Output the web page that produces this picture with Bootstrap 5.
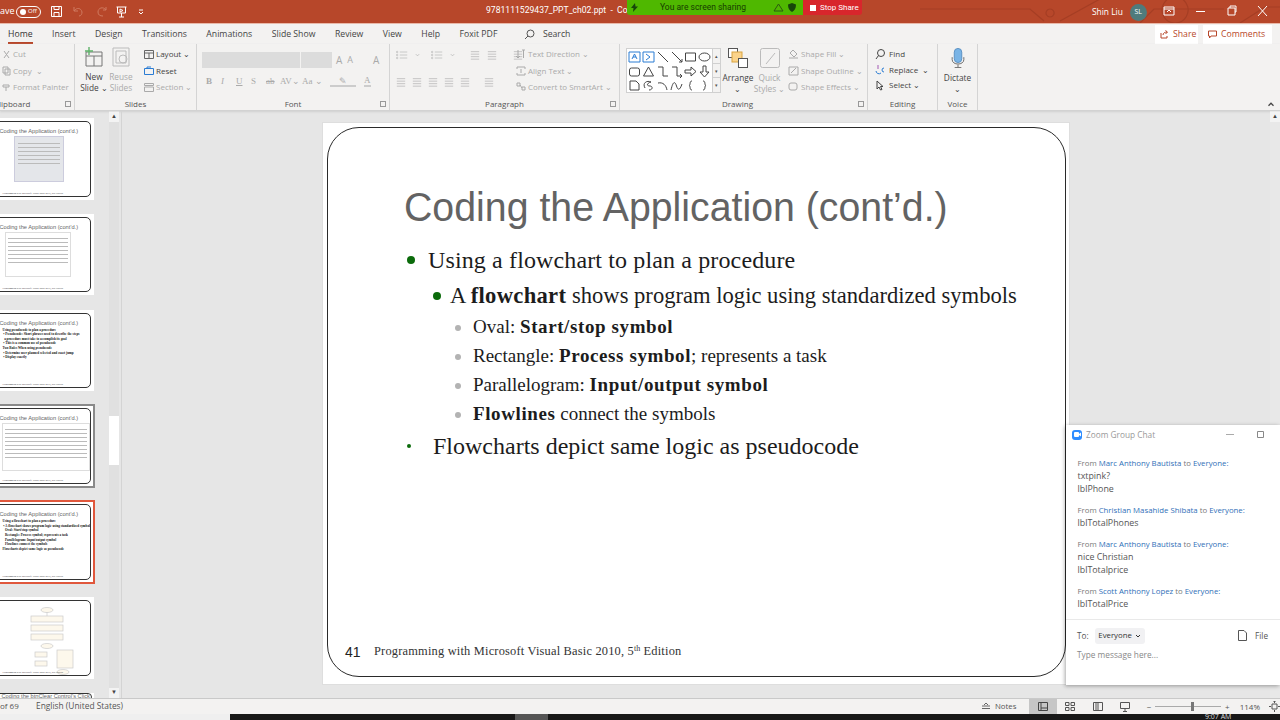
<!DOCTYPE html>
<html lang="en"><head><meta charset="utf-8"><title>PowerPoint</title>
<link href="https://cdn.jsdelivr.net/npm/bootstrap@5.3.0/dist/css/bootstrap.min.css" rel="stylesheet">
<style>
html,body{height:720px;width:1280px;overflow:hidden;margin:0}
body{font-family:"Open Sans","Liberation Sans",sans-serif;font-size:9px;color:#444;background:#e6e6e6;position:relative;line-height:1.2}
svg{display:block;flex:none}
.ic{fill:none;stroke:currentColor;stroke-width:1}
.titlebar{height:23px;background:#b7472a;color:#fff;position:relative;overflow:hidden}
.circuit{position:absolute;right:0;top:0;stroke:#a53e24;fill:none;stroke-width:1.2}
.ave{width:16px;white-space:nowrap}
.toggle{width:25px;height:12px;border:1px solid #fff;border-radius:7px;font-size:6px;gap:2px;padding-left:3px}
.toggle i{width:6px;height:6px;background:#fff;border-radius:50%}
.q1{margin-left:10px}.q2{margin-left:10px}.q3{margin-left:12px}.q4{margin-left:8px}.q5{margin-left:11px}
.doc{position:absolute;left:486px;top:5px;font-size:8.6px;font-family:"Roboto",sans-serif}
.user{position:absolute;left:1092px;top:4px;gap:7px;font-size:8.4px}
.avatar{width:17px;height:17px;border-radius:50%;background:#4f7b7c;font-size:7px}
.winbtns{position:absolute;left:1163px;top:5px;gap:18px}
.winbtns svg+svg{margin-left:2px}
.sharing{position:absolute;left:627px;top:0;height:15px;z-index:5;font-family:"Roboto",sans-serif;font-size:8.5px}
.sg{width:176px;background:#4fb800;color:#173c00;border-radius:0 0 0 3px;padding:0 4px;white-space:nowrap}
.sr{width:59px;background:#d8262c;color:#fff;border-radius:0 0 3px 0;gap:4px;padding-left:7px;font-size:8px;white-space:nowrap}
.sr i{width:6px;height:6px;background:#fff;flex:none}
.tabs{height:21px;background:#f3f2f1;padding-left:8px;gap:19.5px;font-size:8.7px;position:relative;border-top:1px solid #e9b9a9}
.tabs .on{color:#333;position:relative}
.tabs .on::after{content:"";position:absolute;left:0;right:0;bottom:-5px;height:2px;background:#b7472a}
.topbtn{position:absolute;top:1px;height:19px;background:#fff;color:#b7472a;gap:4px;padding:0 5px;font-size:8.7px}
.ribbon{height:67px;background:#f3f2f1;border-bottom:1px solid #d2d2d2;box-shadow:0 1px 2px #cfcfcf;position:relative}
.grp{height:66px;border-right:1px solid #d4d4d4;position:relative;flex:none;overflow:hidden}
.lbl{position:absolute;left:0;right:0;bottom:-1px;text-align:center;font-size:8px;color:#555;height:14px;line-height:14px}
.launch{position:absolute;right:3px;bottom:3px;width:6px;height:6px;border:1px solid #999}
.col3{display:flex;flex-direction:column;gap:4.5px;font-size:8px}
.col3>div{display:flex;align-items:center;gap:2px;height:12px;white-space:nowrap}
.dis{color:#aaa}
.big{display:flex;flex-direction:column;align-items:center;text-align:center;font-size:8.3px;line-height:11px;flex:none;white-space:nowrap}
.c1{width:75px}.c2{width:122px}.c3{width:193px}.c4{width:230px}.c5{width:248px}.c6{width:70px}.c7{width:40px}
.combo{height:16px;background:#dcdcdc;width:130px;flex:none}
.combo i{height:100%;border-right:1px solid #f3f2f1}
.gallery{width:87px;height:45px;background:#fff;border:1px solid #d0d0d0;display:grid;grid-template-columns:repeat(6,14px);grid-auto-rows:14.5px;padding:1px 1px;color:#444;flex:none}
.galside{width:8px;height:45px;border:1px solid #d0d0d0;border-left:0;color:#555;font-size:5px;flex:none}
.galside span{flex:1;display:flex;align-items:center;justify-content:center;border-bottom:1px solid #d0d0d0}
.galside span:last-child{border:0}
.main{height:587px;position:relative;overflow:hidden}
.side{width:122px;flex:none;border-right:1px solid #d4d4d4;position:relative;overflow:hidden}
.thumbs{width:109px;overflow:hidden;padding-top:7px;display:flex;flex-direction:column;align-items:flex-end;gap:14.2px;padding-right:15.5px;height:100%}
.thumb{width:122px;height:81.6px;background:#fff;flex:none;padding:2px;border:1px solid transparent;position:relative}
.thumb>div{height:100%;border:1px solid #333;border-radius:5px;padding:5px 0 0 27px;overflow:hidden;position:relative;font-family:"Liberation Serif",serif;color:#111;font-size:3.3px;line-height:4.6px;white-space:nowrap}
.thumb.grey{outline:2px solid #8a8a8a;outline-offset:-1px}
.thumb.act{outline:2px solid #e0573c;outline-offset:-1px}
.thumb.cut{height:5px;padding:0 2px;border:0}
.thumb.cut>div{padding-top:0;height:8px}
.tt{font:5.7px/8px "Liberation Sans",sans-serif;color:#666;white-space:nowrap;margin-left:-3px;margin-bottom:1px}
.cut .tt{line-height:4px;margin:0}
.ft{position:absolute;left:27px;bottom:1px;font-size:2.5px;line-height:3px;color:#333;white-space:nowrap}
.shot{background:#e4e6ea;border:1px solid #ccd;margin-left:11px;width:50px;height:46px;padding:3px}
.shot b,.tblb b{display:block;height:1px;background:#bbb;margin:3px 0}
.tblb{border:1px solid #ddd;width:66px;height:45px;margin-left:2px;padding:2px}
.wide{width:88px;height:48px;margin-left:-1px}
.fl{width:60px;height:70px;margin-left:14px}
.sb{position:absolute;top:0;bottom:0;width:10px;left:109px;background:#e0e0e0;font-size:6px;color:#444}
.sb .u,.sb .d,.sb2 .u{position:absolute;left:0;width:10px;height:10px;background:#f3f3f3;display:flex;align-items:center;justify-content:center}
.sb .u{top:1px}.sb .d{bottom:0}
.sb .th{position:absolute;left:0;width:10px;top:305px;height:49px;background:#fff}
.sb2{position:absolute;top:0;bottom:0;right:0;width:10px;background:#e8e8e8;font-size:6px;color:#444}
.sb2 .u{top:1px}
.canvas{flex:1;padding:11px 10px 0 0}
.slide{width:748px;height:563px;background:#fff;border:1px solid #dedede;margin:0 auto;padding:4px 3px 7px 4px}
.frame{height:100%;border:1px solid #2a2a2a;border-radius:32px;padding-left:77px;display:flex;flex-direction:column;position:relative}
.stitle{font:41px/44px "Liberation Sans",sans-serif;color:#636363;margin-top:57px;white-space:nowrap;transform:scaleX(.958);transform-origin:0 50%;margin-left:-1px}
.serif{font-family:"Liberation Serif",serif;color:#1c1c1c;white-space:nowrap;margin-top:16px}
.l1,.l2,.l3{display:flex;align-items:center}
.dot{border-radius:50%;flex:none}
.l1{font-size:24px;height:30px}
.l2{font-size:22.6px;height:30px;margin-left:28px;margin-top:6px}
.l3{font-size:19px;height:29px;margin-left:49px}
.l3 b{letter-spacing:.6px}
.l2 b{letter-spacing:.3px}
.l3.first{margin-top:2px}
.l1.last{margin-top:2px}
.b1{width:8px;height:8px;margin-left:2px;margin-right:13px}
.b2{width:8px;height:8px;margin-right:9px}
.b3{width:6px;height:6px;margin-right:12px;margin-left:1px}
.b4{width:4px;height:4px;margin-left:2px;margin-right:22px}
.g{background:#0b6b0b}.s{background:#b3b3b3}
.sfoot{margin-top:auto;margin-left:-60px;height:25px;margin-bottom:12px;display:flex;align-items:center}
.num{font:14px "Liberation Sans",sans-serif;color:#222;width:29px}
.ftxt{font:12.4px "Liberation Serif",serif;color:#333;letter-spacing:.2px}
.ftxt sup{font-size:8px;letter-spacing:0}
.status{height:16px;background:#f3f2f1;border-top:1px solid #c9c9c9;font-size:8px;color:#555;position:relative}
.st-l{position:absolute;left:36px;top:2px;font-size:8.4px;color:#555}
.st-o{position:absolute;left:0;top:2px}
.st-r{position:absolute;left:981px;top:0;height:15px;width:299px}
.vb{width:27.3px;height:15px;flex:none}
.vb.on{background:#c6c6c6}
.slider{width:70px;height:1px;background:#aaa;position:relative}
.slider i{position:absolute;left:36px;top:-4px;width:3px;height:9px;background:#777}
.under{height:6px;background:#efefef;position:relative;overflow:hidden}
.blk{position:absolute;left:230px;right:0;top:0;bottom:0;background:#181818}
.blk i{position:absolute;left:285px;width:33px;top:0;bottom:0;background:#555}
.clock{position:absolute;left:975px;top:-1px;font-size:7px;color:#ddd;line-height:7px}
.chat{position:absolute;left:1066px;top:425px;width:214px;height:260px;background:#fff;box-shadow:-1px 1px 4px rgba(0,0,0,.35);z-index:6;font-family:"Open Sans",sans-serif;color:#555}
.chead{height:19px;padding:0 0 0 6px;color:#999;font-size:8.3px;gap:4px;position:relative}
.zic{width:10px;height:10px;border-radius:3px;background:#2d8cff}
.msgs{height:176px;padding:13px 0 0 11.5px;font-size:8.85px;line-height:13px;border-bottom:1px solid #e9e9e9}
.msg{margin-bottom:8px;color:#555}
.from{font-size:7.8px;color:#777;white-space:nowrap}
.from span{color:#2f6fb8}
.cto{height:31px;padding:0 12px 0 11px;font-size:8.2px;position:relative}
.pill{background:#f1f1f3;border-radius:3px;height:16px;width:50px;margin-left:6px;color:#333;font-size:7.8px;gap:3px}
.place{padding-left:11px;color:#888;font-size:8.3px;margin-top:-1px}
</style></head>
<body>
<svg width="0" height="0" class="position-absolute"><defs>
<symbol id="list" viewBox="0 0 16 12"><circle cx="1.5" cy="2" r="1"/><circle cx="1.5" cy="6" r="1"/><circle cx="1.5" cy="10" r="1"/><path d="M5 2h10M5 6h10M5 10h10"/></symbol>
<symbol id="align" viewBox="0 0 12 12"><path d="M1 2h10M1 5h10M1 8h10M1 11h10"/></symbol>
<symbol id="chev" viewBox="0 0 6 4"><path d="M1 1l2 2 2-2"/></symbol>
</defs></svg>

<div class="titlebar">
<svg class="circuit" width="560" height="23" viewBox="0 0 560 23"><path d="M200 9h110l14 12M330 9a4 4 0 1 0 .1 0M340 21l40-22M420 23l14-14h70M455 23a13 13 0 1 1 .1 0M520 23l25-16h15"/></svg>
<div class="d-flex align-items-center h-100">
<span class="ave">ave</span>
<div class="toggle d-flex align-items-center"><i></i><span>Off</span></div>
<svg class="ic q1" width="11" height="11" viewBox="0 0 11 11" color="#fff"><path d="M.5.5h10v10H.5zM3 .5v3h5v-3M3 10.500v-4h5v4"/></svg>
<svg class="ic q2" width="13" height="11" viewBox="0 0 13 11" color="#cf7a60"><path d="M2 1v4h4M2 5c3-4 7-3 8 1 0 2-1 4-3 4"/></svg>
<svg class="ic q3" width="11" height="11" viewBox="0 0 11 11" color="#cf7a60"><path d="M9 1v3H6M9 4C6 0 1 2 1 6c0 3 2 4 5 4"/></svg>
<svg class="ic q4" width="11" height="12" viewBox="0 0 11 12" color="#fff"><path d="M.5 1h10M1.500 1v6h8V1M5.500 7v4M3 11h5M4 3l3 1.500L4 6z"/></svg>
<svg class="ic q5" width="6" height="6" viewBox="0 0 6 6" color="#fff"><path d="M1 1h4M1 3l2 2 2-2"/></svg>
</div>
<div class="doc">9781111529437_PPT_ch02.ppt&nbsp; -&nbsp; Comp</div>
<div class="user d-flex align-items-center"><span>Shin Liu</span><div class="avatar d-flex align-items-center justify-content-center">SL</div></div>
<div class="winbtns d-flex align-items-center">
<svg class="ic" width="12" height="12" viewBox="0 0 12 12" color="#fff"><path d="M1 2h10v8H1zM1 4h10M4 7l2-2 2 2"/></svg>
<svg class="ic" width="11" height="12" viewBox="0 0 11 12" color="#fff"><path d="M1 6.500h9"/></svg>
<svg class="ic" width="11" height="12" viewBox="0 0 11 12" color="#fff"><path d="M2 3h7v7H2zM4 3V1h6v6H9"/></svg>
<svg class="ic" width="11" height="12" viewBox="0 0 11 12" color="#fff"><path d="M1 1l9 10M10 1L1 11"/></svg>
</div>
</div>

<div class="sharing d-flex">
<div class="sg d-flex align-items-center">
<svg width="7" height="9" viewBox="0 0 7 9" fill="#17460a"><path d="M4 0L0 5h2.500L2 9l5-5.500H4.500z"/></svg>
<span style="margin-left:22px">You are screen sharing</span>
<svg class="ic ms-auto" width="11" height="9" viewBox="0 0 11 9" color="#2c5a10"><path d="M5.500 1L10 8H1z"/></svg>
<svg style="margin:0 3px 0 4px" width="8" height="9" viewBox="0 0 8 9" fill="#17460a"><path d="M4 0l4 1.500c0 4-1.500 6-4 7.500C1.500 7.500 0 5.500 0 1.500z"/></svg>
</div>
<div class="sr d-flex align-items-center"><i></i><span>Stop Share</span></div>
</div>

<div class="tabs d-flex align-items-center">
<span class="on">Home</span><span>Insert</span><span>Design</span><span>Transitions</span><span>Animations</span><span>Slide Show</span><span>Review</span><span>View</span><span>Help</span><span>Foxit PDF</span>
<span class="d-flex align-items-center gap-2" style="margin-left:7px"><svg class="ic" width="11" height="11" viewBox="0 0 11 11" color="#555"><circle cx="6.500" cy="4.500" r="3.500"/><path d="M4 7l-3 3"/></svg>Search</span>
<div class="topbtn d-flex align-items-center" style="left:1155px;width:43px"><svg class="ic" width="9" height="9" viewBox="0 0 9 9"><path d="M1 3v5h6V6M3 5c0-2 2-3 4-3M5.500.5L7.500 2 5.500 4"/></svg>Share</div>
<div class="topbtn d-flex align-items-center" style="left:1203px;width:69px"><svg class="ic" width="9" height="9" viewBox="0 0 9 9"><path d="M.5 1h8v5H3L1.500 8V6h-1z"/></svg>Comments</div>
</div>

<div class="ribbon d-flex">
<div class="grp c1">
<div class="col3 dis" style="padding:4px 0 0 2px">
<div><svg class="ic" width="9" height="9" viewBox="0 0 9 9"><path d="M2 1l5 7M7 1L2 8"/></svg>Cut</div>
<div><svg class="ic" width="9" height="10" viewBox="0 0 9 10"><path d="M1 1h5v6H1zM3 3h5v6H3z"/></svg>Copy &nbsp;⌄</div>
<div><svg class="ic" width="9" height="9" viewBox="0 0 9 9"><path d="M1 2h6v2H1zM4 4v4"/></svg>Format Painter</div>
</div>
<div class="lbl text-start" style="left:-6px">Clipboard</div><div class="launch"></div>
</div>

<div class="grp c2 d-flex" style="padding:3px 0 0 8px">
<div class="big" style="width:22px"><svg width="20" height="20" viewBox="0 0 20 20" fill="none" stroke="#777"><path d="M2 5h16v14H2zM2 9h16M10 9v10"/><path d="M5 0v8M1 4h8" stroke="#5fb36a" stroke-width="1.400"/></svg><div class="mt-1">New<br>Slide ⌄</div></div>
<div class="big dis ms-1" style="width:24px"><svg width="20" height="20" viewBox="0 0 20 20" fill="none" stroke="#bbb"><path d="M2 1h16v18H2zM5 4h10v12H5z"/><circle cx="12" cy="12" r="4"/></svg><div class="mt-1">Reuse<br>Slides</div></div>
<div class="col3" style="padding-top:1px;margin-left:11px">
<div><svg class="ic" width="10" height="9" viewBox="0 0 10 9" color="#666"><path d="M.5.5h9v8h-9zM.5 3h9M5 3v5"/></svg>Layout ⌄</div>
<div><svg width="10" height="9" viewBox="0 0 10 9" fill="none" stroke="#2b7cd3"><path d="M.5 2.500h9v6h-9zM3 2.500V1h4"/></svg>Reset</div>
<div class="dis"><svg class="ic" width="10" height="9" viewBox="0 0 10 9"><path d="M.5.5h9v2h-9zM.5 4h9v4.500h-9z"/></svg>Section ⌄</div>
</div>
<div class="lbl">Slides</div>
</div>

<div class="grp c3" style="padding:8px 0 0 5px">
<div class="d-flex align-items-center dis">
<div class="combo d-flex"><i style="width:99px"></i></div>
<span class="ms-1" style="font-size:10px;margin-right:5px">A</span><span style="font-size:9px;margin-right:20px">A</span><span style="font-size:10px">A</span>
</div>
<div class="d-flex align-items-center dis" style="margin-top:6px;padding-left:4px;font-family:'Liberation Serif',serif;font-size:9px;height:14px">
<b style="width:15px">B</b><i style="width:15px">I</i><u style="width:15px">U</u><span style="width:15px">S</span><s style="width:14px">ab</s><span style="width:22px">AV⌄</span><span style="width:28px">Aa ⌄</span>
<span style="width:26px;border-bottom:2px solid #ccc;height:11px;text-align:center">✎</span><span class="ms-2" style="border-bottom:2px solid #ccc">A</span>
</div>
<div class="lbl">Font</div><div class="launch"></div>
</div>

<div class="grp c4 d-flex dis" style="padding:3px 0 0 6px">
<div style="width:120px;padding-top:3px">
<div class="d-flex align-items-center" style="gap:7px">
<svg class="ic" width="12" height="10" color="#bbb"><use href="#list"/></svg><svg class="ic me-1" width="5" height="4" color="#bbb"><use href="#chev"/></svg>
<svg class="ic" width="12" height="10" color="#bbb"><use href="#list"/></svg><svg class="ic me-2" width="5" height="4" color="#bbb"><use href="#chev"/></svg>
<svg class="ic" width="10" height="10" color="#bbb"><use href="#align"/></svg><svg class="ic" width="10" height="10" color="#bbb"><use href="#align"/></svg><svg class="ic ms-2" width="12" height="10" color="#bbb"><use href="#align"/></svg>
</div>
<div class="d-flex align-items-center" style="gap:6px;margin-top:17px">
<svg class="ic" width="10" height="10" color="#bbb"><use href="#align"/></svg><svg class="ic" width="10" height="10" color="#bbb"><use href="#align"/></svg><svg class="ic" width="10" height="10" color="#bbb"><use href="#align"/></svg><svg class="ic" width="10" height="10" color="#bbb"><use href="#align"/></svg><svg class="ic" width="10" height="10" color="#bbb"><use href="#align"/></svg><svg class="ic ms-2" width="10" height="10" color="#bbb"><use href="#align"/></svg>
</div>
</div>
<div class="col3" style="padding-top:1px">
<div><svg class="ic" width="10" height="10" viewBox="0 0 10 10"><path d="M2 1v8M0 7l2 2 2-2M6 1h3M7.500 1v8"/></svg>Text Direction ⌄</div>
<div><svg class="ic" width="10" height="10" viewBox="0 0 10 10"><path d="M1 3V1h8v2M1 7v2h8V7M5 3v4"/></svg>Align Text ⌄</div>
<div><svg class="ic" width="10" height="10" viewBox="0 0 10 10"><path d="M1 1h3v3H1zM6 5h3v3H6zM4 3l2 3"/></svg>Convert to SmartArt ⌄</div>
</div>
<div class="lbl">Paragraph</div><div class="launch"></div>
</div>

<div class="grp c5 d-flex" style="padding:4px 0 0 6px">
<div class="gallery">
<svg width="13" height="13" viewBox="0 0 13 13" fill="none" stroke="#2b7cd3"><path d="M1 2h11v10H1z"/><path d="M4 9l2.500-5L9 9M5 7h3"/></svg>
<svg width="13" height="13" viewBox="0 0 13 13" fill="none" stroke="#2b7cd3"><path d="M1 2h11v10H1zM4 4l4 3-4 3"/></svg>
<svg class="ic" width="13" height="13" viewBox="0 0 13 13"><path d="M2 2l10 10"/></svg>
<svg class="ic" width="13" height="13" viewBox="0 0 13 13"><path d="M2 2l10 10M12 9v3H9"/></svg>
<svg class="ic" width="13" height="13" viewBox="0 0 13 13"><path d="M1.500 3h10v8h-10z"/></svg>
<svg class="ic" width="13" height="13" viewBox="0 0 13 13"><ellipse cx="6.500" cy="7" rx="5.500" ry="4"/></svg>
<svg class="ic" width="13" height="13" viewBox="0 0 13 13"><rect x="1.500" y="3" width="10" height="8" rx="2"/></svg>
<svg class="ic" width="13" height="13" viewBox="0 0 13 13"><path d="M6.500 2l5 9h-10z"/></svg>
<svg class="ic" width="13" height="13" viewBox="0 0 13 13"><path d="M2 2h5v9h5"/></svg>
<svg class="ic" width="13" height="13" viewBox="0 0 13 13"><path d="M2 2h5v9h5M10 9l2 2-2 2"/></svg>
<svg class="ic" width="13" height="13" viewBox="0 0 13 13"><path d="M1 5h6V2l5 4.500L7 11V8H1z"/></svg>
<svg class="ic" width="13" height="13" viewBox="0 0 13 13"><path d="M5 1h3v6h3l-4.500 5L2 7h3z"/></svg>
<svg class="ic" width="13" height="13" viewBox="0 0 13 13"><path d="M2 2h6l3 3v6H2z"/></svg>
<svg class="ic" width="13" height="13" viewBox="0 0 13 13"><path d="M3 9c-3-5 2-8 6-6-4 1-5 4-1 4 3 0 3 4-1 4"/></svg>
<svg class="ic" width="13" height="13" viewBox="0 0 13 13"><path d="M2 4c5-1 8 2 9 7"/></svg>
<svg class="ic" width="13" height="13" viewBox="0 0 13 13"><path d="M1 11C3 2 5 2 6.500 7S10 11 12 5"/></svg>
<svg class="ic" width="13" height="13" viewBox="0 0 13 13"><path d="M8 2C5 2 7 6 5 6.500 7 7 5 11 8 11"/></svg>
<svg class="ic" width="13" height="13" viewBox="0 0 13 13"><path d="M5 2c3 0 1 4 3 4.500C6 7 8 11 5 11"/></svg>
</div>
<div class="galside d-flex flex-column"><span>▴</span><span>▾</span><span>▾</span></div>
<div class="big" style="width:32px;margin-left:1px"><svg width="20" height="20" viewBox="0 0 20 20"><rect x=".5" y=".5" width="9" height="9" fill="#fff" stroke="#555"/><rect x="4" y="4" width="10" height="10" fill="#fbd38a" stroke="#d9a441"/><rect x="10.500" y="10.500" width="9" height="9" fill="#fff" stroke="#555"/></svg><div class="mt-1">Arrange<br>⌄</div></div>
<div class="big dis" style="width:31px"><svg width="20" height="20" viewBox="0 0 20 20" fill="none" stroke="#bbb"><rect x=".5" y=".5" width="19" height="19" rx="2"/><path d="M6 16l9-11"/></svg><div class="mt-1">Quick<br>Styles ⌄</div></div>
<div class="col3 dis" style="margin-left:3px">
<div><svg class="ic" width="11" height="10" viewBox="0 0 11 10"><path d="M5 1l4 4-3 3-4-4zM1 9h9"/></svg>Shape Fill ⌄</div>
<div><svg class="ic" width="11" height="10" viewBox="0 0 11 10"><path d="M1 1h9v8H1zM3 7l5-5"/></svg>Shape Outline ⌄</div>
<div><svg class="ic" width="11" height="10" viewBox="0 0 11 10"><rect x="1" y="1" width="8" height="7" rx="2"/></svg>Shape Effects ⌄</div>
</div>
<div class="lbl text-start" style="left:102px">Drawing</div><div class="launch"></div>
</div>

<div class="grp c6" style="padding:4px 0 0 7px">
<div class="col3" style="gap:3.500px">
<div><svg class="ic" width="10" height="11" viewBox="0 0 10 11"><circle cx="6" cy="4" r="3.500"/><path d="M3.500 6.500L1 10"/></svg>&nbsp;Find</div>
<div><svg width="10" height="11" viewBox="0 0 10 11" fill="none" stroke="#2b7cd3"><path d="M1 7a3 3 0 0 0 5 2"/><path d="M3 1v4" stroke="#a35ab5"/><path d="M9 4a2 2 0 1 0 0 4" stroke="#2b7cd3"/></svg>&nbsp;Replace &nbsp;⌄</div>
<div><svg class="ic" width="10" height="11" viewBox="0 0 10 11"><path d="M2 1v8l2-2 1.500 3L7 9.500 5.500 6.500H8z"/></svg>&nbsp;Select ⌄</div>
</div>
<div class="lbl">Editing</div>
</div>

<div class="grp c7">
<div class="big" style="padding-top:4px"><svg width="16" height="20" viewBox="0 0 18 24" fill="none"><rect x="4.500" y="0.500" width="9" height="17" rx="4.500" fill="#79b4e6" stroke="#4f88bd"/><path d="M2 11v3c0 7 14 7 14 0v-3M9 20v3M5 23.500h8" stroke="#555"/></svg><div class="mt-1">Dictate<br>⌄</div></div>
<div class="lbl">Voice</div>
</div>
<svg class="ic position-absolute" style="right:5px;bottom:3px" width="8" height="5" viewBox="0 0 6 4" color="#444"><path d="M1 3l2-2 2 2"/></svg>
</div>

<div class="main d-flex">
<div class="side">
<div class="thumbs">
<div class="thumb"><div><div class="tt">Coding the Application (cont’d.)</div><div class="shot"><b></b><b></b><b></b><b></b><b></b><b></b></div><div class="ft">Programming with Microsoft Visual Basic 2010, 5th Edition</div></div></div>
<div class="thumb"><div><div class="tt">Coding the Application (cont’d.)</div><div class="tblb"><b></b><b></b><b></b><b></b><b></b><b></b><b></b></div><div class="ft">Programming with Microsoft Visual Basic 2010, 5th Edition</div></div></div>
<div class="thumb"><div><div class="tt">Coding the Application (cont’d.)</div><div class="fw-bold">Using pseudocode to plan a procedure<br>&nbsp;• Pseudocode: Short phrases used to describe the steps<br>&nbsp;&nbsp;a procedure must take to accomplish its goal<br>&nbsp;• This is a common use of pseudocode<br>Two Rules When using pseudocode<br>&nbsp;• Determine user planned selected and exact jump<br>&nbsp;• Display exactly</div><div class="ft">Programming with Microsoft Visual Basic 2010, 5th Edition</div></div></div>
<div class="thumb grey"><div><div class="tt">Coding the Application (cont’d.)</div><div class="tblb wide"><b></b><b></b><b></b><b></b><b></b><b></b><b></b><b></b></div><div class="ft">Programming with Microsoft Visual Basic 2010, 5th Edition</div></div></div>
<div class="thumb act"><div><div class="tt">Coding the Application (cont’d.)</div><div class="fw-bold">Using a flowchart to plan a procedure<br>&nbsp;• A flowchart shows program logic using standardized symbols<br>&nbsp;&nbsp;&nbsp;Oval: Start/stop symbol<br>&nbsp;&nbsp;&nbsp;Rectangle: Process symbol; represents a task<br>&nbsp;&nbsp;&nbsp;Parallelogram: Input/output symbol<br>&nbsp;&nbsp;&nbsp;Flowlines connect the symbols<br>Flowcharts depict same logic as pseudocode</div><div class="ft">Programming with Microsoft Visual Basic 2010, 5th Edition</div></div></div>
<div class="thumb"><div><svg class="fl" viewBox="0 0 60 70" fill="#fdf8ec" stroke="#ccc" stroke-width=".7"><ellipse cx="30" cy="4" rx="6" ry="2.500"/><path d="M30 6v4"/><rect x="14" y="10" width="32" height="6"/><rect x="14" y="19" width="32" height="6"/><rect x="14" y="28" width="32" height="6"/><ellipse cx="30" cy="40" rx="6" ry="2.500"/><rect x="40" y="44" width="16" height="18"/><rect x="18" y="46" width="12" height="5"/><rect x="18" y="55" width="12" height="5"/><ellipse cx="46" cy="66" rx="6" ry="2.500"/></svg><div class="ft">Programming with Microsoft Visual Basic 2010, 5th Edition</div></div></div>
<div class="thumb cut"><div><div class="tt">Coding the btnClear Control’s Click</div></div></div>
</div>
<div class="sb"><span class="u">▲</span><span class="th"></span><span class="d">▼</span></div>
</div>
<div class="canvas">
<div class="slide"><div class="frame">
<div class="stitle">Coding the Application (cont’d.)</div>
<div class="serif">
<div class="l1"><span class="dot g b1"></span><span style="letter-spacing:.13px">Using a flowchart to plan a procedure</span></div>
<div class="l2"><span class="dot g b2"></span><span>A <b>flowchart</b> shows program logic using standardized symbols</span></div>
<div class="l3 first"><span class="dot s b3"></span><span>Oval: <b>Start/stop symbol</b></span></div>
<div class="l3"><span class="dot s b3"></span><span>Rectangle: <b>Process symbol</b>; represents a task</span></div>
<div class="l3"><span class="dot s b3"></span><span>Parallelogram: <b>Input/output symbol</b></span></div>
<div class="l3"><span class="dot s b3"></span><span><b>Flowlines</b> connect the symbols</span></div>
<div class="l1 last"><span class="dot g b4"></span><span>Flowcharts depict same logic as pseudocode</span></div>
</div>
<div class="sfoot"><span class="num">41</span><span class="ftxt">Programming with Microsoft Visual Basic 2010, 5<sup>th</sup> Edition</span></div>
</div></div>
</div>
<div class="sb2"><span class="u">▲</span></div>
</div>

<div class="status">
<span class="st-o">of 69</span><span class="st-l">English (United States)</span>
<div class="st-r d-flex align-items-center">
<svg class="ic me-1" width="10" height="9" viewBox="0 0 10 9" color="#666"><path d="M1 4h8M1 6.500h8M3 3l2-2 2 2"/></svg><span style="margin-right:13px;font-size:7.8px">Notes</span>
<div class="vb on d-flex align-items-center justify-content-center"><svg class="ic" width="10" height="9" viewBox="0 0 10 9" color="#444"><path d="M.5.5h9v8h-9zM3 .5v8M3 6h6.500"/></svg></div>
<div class="vb d-flex align-items-center justify-content-center"><svg class="ic" width="10" height="9" viewBox="0 0 10 9" color="#555"><path d="M.5.5h3.500v3H.5zM6 .5h3.500v3H6zM.5 5.500h3.500v3H.5zM6 5.500h3.500v3H6z"/></svg></div>
<div class="vb d-flex align-items-center justify-content-center"><svg class="ic" width="10" height="9" viewBox="0 0 10 9" color="#555"><path d="M.5.5h9v8h-9zM5 .5v8M3 .5v8"/></svg></div>
<div class="vb d-flex align-items-center justify-content-center"><svg class="ic" width="10" height="10" viewBox="0 0 10 10" color="#555"><path d="M.5.5h9v6h-9zM5 6.500V9M3 9.500h4"/></svg></div>
<span class="ms-2">−</span>
<div class="slider mx-1"><i></i></div>
<span>+</span><span style="margin-left:10px">114%</span>
<svg class="ic" style="margin-left:9px" width="11" height="11" viewBox="0 0 11 11" color="#555"><path d="M3 3h5v5H3zM5.500 0v2M4.500 1l1-1 1 1M5.500 9v2M0 5.500h2M9 5.500h2"/></svg>
</div>
</div>
<div class="under"><div class="blk"><i></i><span class="clock">9:07 AM</span></div></div>

<div class="chat">
<div class="chead d-flex align-items-center">
<div class="zic d-flex align-items-center justify-content-center"><svg width="7" height="5" viewBox="0 0 7 5" fill="#fff"><rect width="5" height="5" rx="1"/><path d="M5 2l2-1.500v4L5 3z"/></svg></div>
<span>Zoom Group Chat</span>
<svg class="ic position-absolute" style="left:160px;top:9px" width="8" height="1" viewBox="0 0 8 1" color="#aaa"><path d="M0 .5h8"/></svg>
<svg class="ic position-absolute" style="left:191px;top:6px" width="7" height="7" viewBox="0 0 7 7" color="#888"><path d="M.5.500h6v6h-6z"/></svg>
</div>
<div class="msgs">
<div class="msg"><div class="from">From <span>Marc Anthony Bautista</span> to <span>Everyone:</span></div>txtpink?<br>lblPhone</div>
<div class="msg"><div class="from">From <span>Christian Masahide Shibata</span> to <span>Everyone:</span></div>lblTotalPhones</div>
<div class="msg"><div class="from">From <span>Marc Anthony Bautista</span> to <span>Everyone:</span></div>nice Christian<br>lblTotalprice</div>
<div class="msg"><div class="from">From <span>Scott Anthony Lopez</span> to <span>Everyone:</span></div>lblTotalPrice</div>
</div>
<div class="cto d-flex align-items-center">
<span>To:</span>
<div class="pill d-flex align-items-center justify-content-center">Everyone<svg class="ic" width="6" height="4" viewBox="0 0 6 4" color="#333"><path d="M1 1l2 2 2-2"/></svg></div>
<svg class="ic ms-auto me-2" width="9" height="11" viewBox="0 0 9 11" color="#555"><path d="M.5.500h5.500L8.500 3v7.500h-8z"/></svg><span>File</span>
</div>
<div class="place">Type message here...</div>
</div>
</body></html>
